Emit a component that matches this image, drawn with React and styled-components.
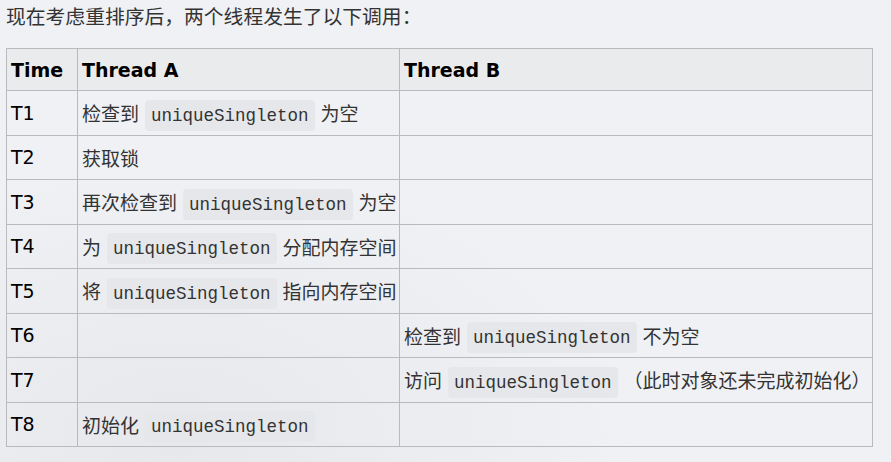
import React from 'react';
import styled, { createGlobalStyle } from 'styled-components';

const GlobalStyle = createGlobalStyle`
  html, body {
    margin: 0;
    padding: 0;
    background: #f0f1f4;
  }
  body {
    font-family: "DejaVu Sans", "Noto Sans CJK SC", sans-serif;
    color: #333;
  }
`;

const Page = styled.div`
  width: 891px;
  height: 462px;
  padding: 0 6px;
  box-sizing: border-box;
  overflow: hidden;
  background:
    radial-gradient(ellipse at 20% 95%, rgba(225, 226, 229, 0.6), rgba(240, 241, 244, 0) 45%),
    #f0f1f4;
`;

const Intro = styled.p`
  margin: 0;
  padding-top: 4px;
  height: 44px;
  font-size: 19.8px;
  line-height: 28px;
  color: #333;
`;

const Table = styled.table`
  border-collapse: collapse;
  width: 866px;
  font-size: 19px;
  table-layout: fixed;
`;

const HeadCell = styled.th`
  width: ${p => p.$w}px;
  height: 42px;
  padding: 0 4px;
  box-sizing: border-box;
  text-align: left;
  font-weight: bold;
  color: #000;
  background: #eaebed;
  border: 1px solid #b9babd;
`;

const Cell = styled.td`
  height: 44.5px;
  padding: 0 4px;
  box-sizing: border-box;
  border: 1px solid #b9babd;
  white-space: nowrap;
  color: ${p => (p.$time ? '#000' : '#333')};
`;

const Code = styled.code`
  font-family: "Liberation Mono", monospace;
  font-size: 17.5px;
  color: #333;
  background: #e6e7ea;
  border-radius: 4px;
  padding: 5.5px 6px;
  vertical-align: 1px;
`;

const rows = [
  { t: 'T1', a: ['检查到 ', 'uniqueSingleton', ' 为空'] },
  { t: 'T2', a: ['获取锁'] },
  { t: 'T3', a: ['再次检查到 ', 'uniqueSingleton', ' 为空'] },
  { t: 'T4', a: ['为 ', 'uniqueSingleton', ' 分配内存空间'] },
  { t: 'T5', a: ['将 ', 'uniqueSingleton', ' 指向内存空间'] },
  { t: 'T6', b: ['检查到 ', 'uniqueSingleton', ' 不为空'] },
  { t: 'T7', b: ['访问 ', 'uniqueSingleton', ' （此时对象还未完成初始化）'] },
  { t: 'T8', a: ['初始化 ', 'uniqueSingleton'] },
];

function Content({ parts }) {
  if (!parts) return null;
  return parts.map((p, i) => (i === 1 ? <Code key={i}>{p}</Code> : <span key={i}>{p}</span>));
}

function App() {
  return (
    <>
      <GlobalStyle />
      <Page>
        <Intro>现在考虑重排序后，两个线程发生了以下调用：</Intro>
        <Table>
          <thead>
            <tr>
              <HeadCell $w={71}>Time</HeadCell>
              <HeadCell $w={322}>Thread A</HeadCell>
              <HeadCell $w={473}>Thread B</HeadCell>
            </tr>
          </thead>
          <tbody>
            {rows.map(r => (
              <tr key={r.t}>
                <Cell $time>{r.t}</Cell>
                <Cell><Content parts={r.a} /></Cell>
                <Cell><Content parts={r.b} /></Cell>
              </tr>
            ))}
          </tbody>
        </Table>
      </Page>
    </>
  );
}

export default App;
